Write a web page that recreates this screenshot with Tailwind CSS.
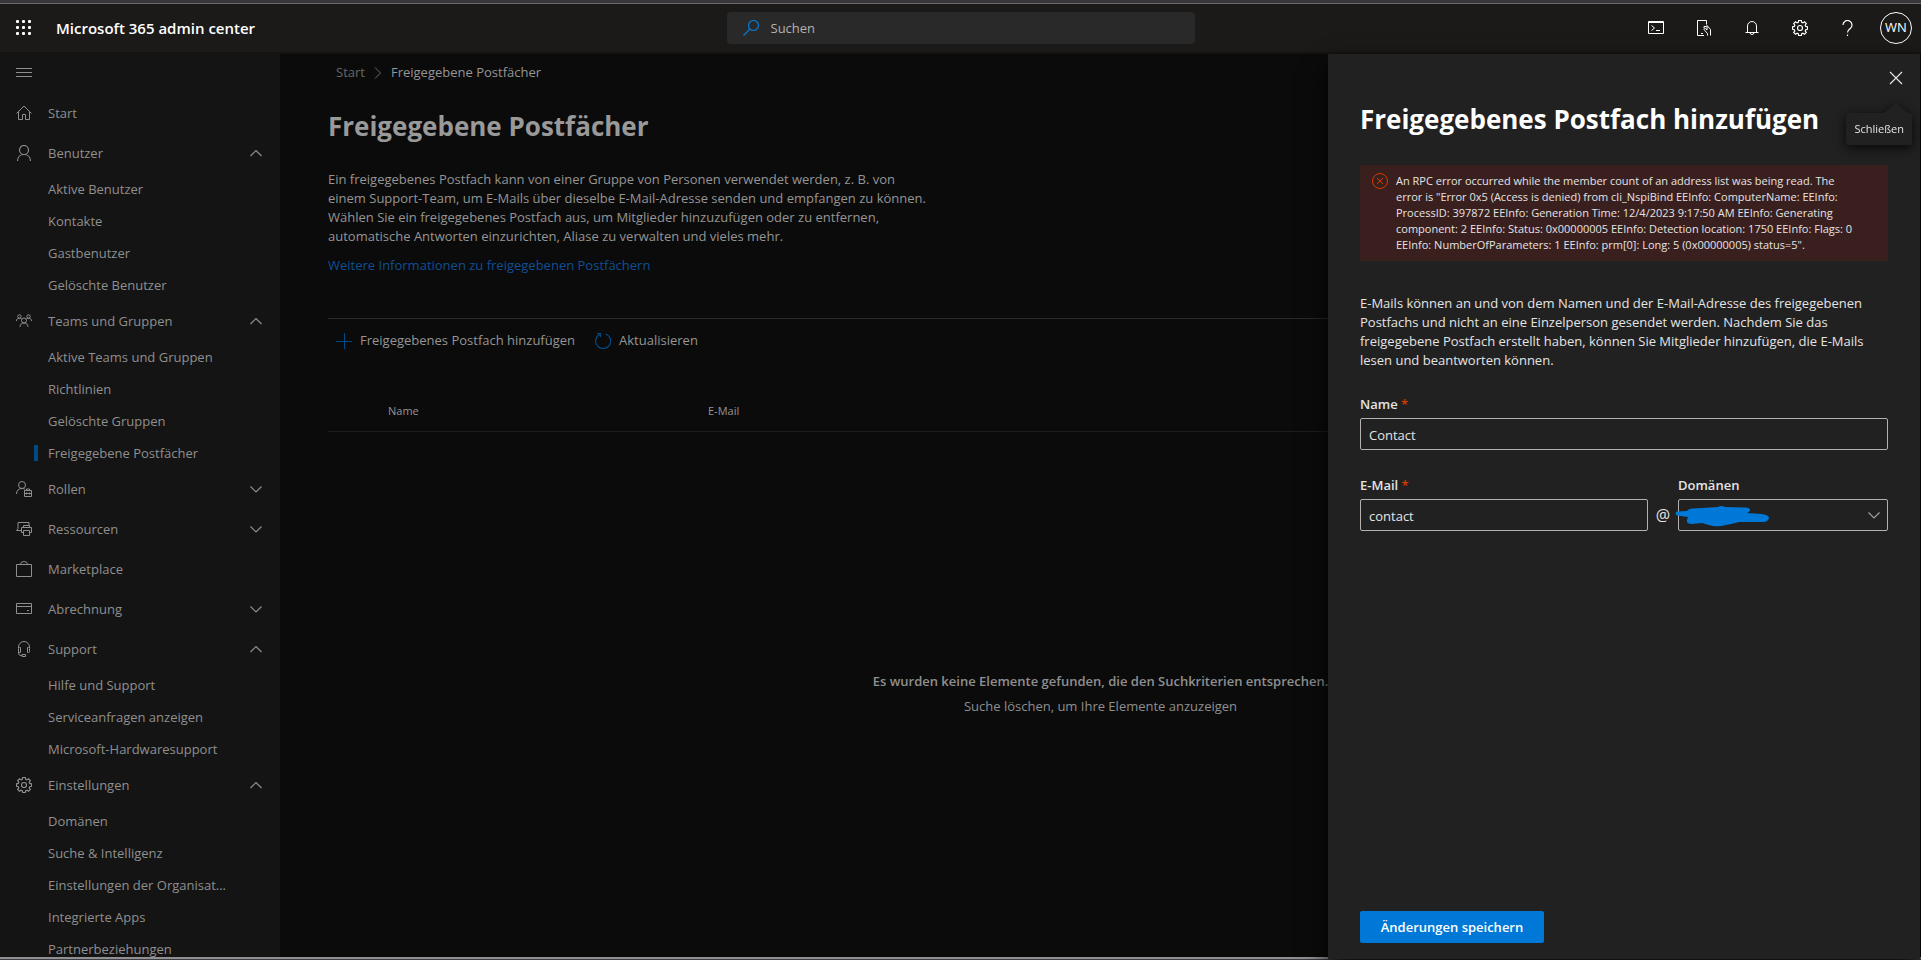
<!DOCTYPE html>
<html lang="de">

<head>
    <meta charset="UTF-8">
    <meta name="viewport" content="width=device-width, initial-scale=1.0">
    <title>Microsoft 365 admin center</title>
    <script src="https://cdn.jsdelivr.net/npm/@tailwindcss/browser@4"></script>
</head>

<body class="h-screen flex flex-col overflow-hidden bg-[#0b0b0b] text-[#8f8f8f] text-[13px] font-['Open_Sans','Noto_Sans',sans-serif]">

    <!-- Icons used more than once -->
    <svg class="hidden">
        <symbol id="up" viewBox="0 0 12 12">
            <path d="M0.5 9L6 3.5L11.5 9" fill="none" stroke="currentColor" stroke-width="1.2" />
        </symbol>
        <symbol id="down" viewBox="0 0 12 12">
            <path d="M0.5 3.5L6 9L11.5 3.5" fill="none" stroke="currentColor" stroke-width="1.2" />
        </symbol>
        <symbol id="gear" viewBox="0 0 16 16">
            <path d="M6.7 0.5h2.6l.4 1.9 1.2.5 1.7-1.1 1.7 1.8-1.1 1.6.5 1.2 1.9.4v2.5l-1.9.4-.5 1.2 1.1 1.6-1.8 1.8-1.6-1.1-1.2.5-.4 1.8H6.7l-.4-1.8-1.2-.5-1.6 1.1-1.8-1.8 1.1-1.6-.5-1.2-1.8-.4V6.8l1.8-.4.5-1.2-1.1-1.6 1.8-1.8 1.6 1.1 1.2-.5z" fill="none" stroke="currentColor" stroke-width="1.2" />
            <circle cx="8" cy="8" r="2.5" fill="none" stroke="currentColor" stroke-width="1.2" />
        </symbol>
    </svg>

    <!-- Window edge -->
    <div class="h-1 shrink-0 bg-[#38383c] border-b border-[#6c6a68]"></div>

    <!-- Header -->
    <header class="h-[50px] shrink-0 flex items-center justify-between bg-[#1b1a19] border-b-2 border-[#141312] px-[9px] text-white">
        <div class="flex items-center flex-1">
            <button aria-label="App-Startfeld" class="ml-[7px]">
                <svg class="size-4" viewBox="0 0 16 16" fill="currentColor">
                    <rect x="0" y="0" width="3" height="3" rx="1" /><rect x="6" y="0" width="3" height="3" rx="1" /><rect x="12" y="0" width="3" height="3" rx="1" />
                    <rect x="0" y="6" width="3" height="3" rx="1" /><rect x="6" y="6" width="3" height="3" rx="1" /><rect x="12" y="6" width="3" height="3" rx="1" />
                    <rect x="0" y="12" width="3" height="3" rx="1" /><rect x="6" y="12" width="3" height="3" rx="1" /><rect x="12" y="12" width="3" height="3" rx="1" />
                </svg>
            </button>
            <a href="#" class="ml-6 text-[15px] font-semibold">Microsoft 365 admin center</a>
        </div>
        <label class="w-[468px] h-8 flex items-center gap-3 rounded bg-[#292929] px-4">
            <svg class="size-4 shrink-0 text-[#0078d4]" viewBox="0 0 16 16" fill="none" stroke="currentColor" stroke-width="1.2">
                <circle cx="10.5" cy="5.5" r="5" />
                <path d="M7 9L0.5 15.5" />
            </svg>
            <input type="search" aria-label="Suchen" placeholder="Suchen" class="w-full pt-0.5 bg-transparent outline-none placeholder:text-[#b4b2b0]">
        </label>
        <div class="flex-1 flex items-center justify-end gap-8">
            <button aria-label="Cloud Shell">
                <svg class="size-4" viewBox="0 0 16 16" fill="none" stroke="currentColor">
                    <path d="M0.5 1.5h15v12h-15zM0.5 2.5h15M3.5 5.5l3 2.5-3 2.5M8 10.5h4" />
                </svg>
            </button>
            <button aria-label="Mobile App">
                <svg class="size-4" viewBox="0 0 16 16" fill="none" stroke="currentColor">
                    <path d="M8 15.5H1.5v-15h9v4M14.5 15.5v-6L11 5.5v4.5L9.5 8.5c-1-.8-2 .3-1.3 1.3l3.3 3.7v2M5 13.5h2M8 8V6.5h2.5" />
                </svg>
            </button>
            <button aria-label="Benachrichtigungen">
                <svg class="size-4" viewBox="0 0 16 16" fill="none" stroke="currentColor">
                    <path d="M3.5 12.5V6a4.5 4.5 0 0 1 9 0v6.5M1.5 12.5h13M6 12.5a2 2 0 0 0 4 0" />
                </svg>
            </button>
            <button aria-label="Einstellungen">
                <svg class="size-4"><use href="#gear" /></svg>
            </button>
            <button aria-label="Hilfe">
                <svg class="size-4" viewBox="0 0 16 16" fill="none" stroke="currentColor" stroke-width="1.2">
                    <path d="M3 5a4.5 4.5 0 1 1 7.3 3.5C8.5 9.9 7.5 10.5 7.5 12.5M7.5 14.5v1.5" />
                </svg>
            </button>
            <button class="-ml-2 size-8 rounded-full border border-white">WN</button>
        </div>
    </header>

    <div class="flex-1 min-h-0 flex">

        <!-- Navigation -->
        <nav class="w-[280px] shrink-0 overflow-hidden bg-[#141414] [&_svg]:mb-0.5">
            <button aria-label="Navigation reduzieren" class="h-10 px-4 block">
                <svg class="size-4" viewBox="0 0 16 16" stroke="currentColor">
                    <path d="M0 3.5h16M0 7.5h16M0 11.5h16" />
                </svg>
            </button>
            <a href="#" class="h-10 px-4 flex items-center gap-4">
                <svg class="size-4" viewBox="0 0 16 16" fill="none" stroke="currentColor">
                    <path d="M0.5 8.5L8 1l7.5 7.5M2.5 7v7.5h4v-5h3v5h4V7" />
                </svg>
                Start
            </a>

            <button class="w-full h-10 pl-4 pr-[18px] flex items-center gap-4 text-left">
                <svg class="size-4" viewBox="0 0 16 16" fill="none" stroke="currentColor" stroke-width="1.2">
                    <circle cx="8" cy="5" r="4.5" />
                    <path d="M1.5 16c0-3.8 2.7-6.5 6.5-6.5s6.5 2.7 6.5 6.5" />
                </svg>
                <span class="flex-1">Benutzer</span>
                <svg class="size-3"><use href="#up" /></svg>
            </button>
            <ul>
                <li><a href="#" class="h-8 pl-12 flex items-center">Aktive Benutzer</a></li>
                <li><a href="#" class="h-8 pl-12 flex items-center">Kontakte</a></li>
                <li><a href="#" class="h-8 pl-12 flex items-center">Gastbenutzer</a></li>
                <li><a href="#" class="h-8 pl-12 flex items-center">Gelöschte Benutzer</a></li>
            </ul>

            <button class="w-full h-10 pl-4 pr-[18px] flex items-center gap-4 text-left">
                <svg class="size-4" viewBox="0 0 16 16" fill="none" stroke="currentColor">
                    <circle cx="3.5" cy="3.5" r="1.7" />
                    <circle cx="12.5" cy="3.5" r="1.7" />
                    <circle cx="8" cy="7.5" r="2.5" />
                    <path d="M0.5 8c0-2 1.2-2.8 3-2.8 1 0 1.7.3 2.2 1M15.5 8c0-2-1.2-2.8-3-2.8-1 0-1.7.3-2.2 1M4 14c0-2.5 1.6-4 4-4s4 1.5 4 4" />
                </svg>
                <span class="flex-1">Teams und Gruppen</span>
                <svg class="size-3"><use href="#up" /></svg>
            </button>
            <ul>
                <li><a href="#" class="h-8 pl-12 flex items-center">Aktive Teams und Gruppen</a></li>
                <li><a href="#" class="h-8 pl-12 flex items-center">Richtlinien</a></li>
                <li><a href="#" class="h-8 pl-12 flex items-center">Gelöschte Gruppen</a></li>
                <li>
                    <a href="#" aria-current="page" class="h-8 pl-[34px] flex items-center gap-[10px]">
                        <span class="w-1 h-4 mb-0.5 bg-[#004a84]"></span>Freigegebene Postfächer
                    </a>
                </li>
            </ul>

            <button class="w-full h-10 pl-4 pr-[18px] flex items-center gap-4 text-left">
                <svg class="size-4" viewBox="0 0 16 16" fill="none" stroke="currentColor">
                    <circle cx="6" cy="4" r="3.5" />
                    <path d="M0.5 13c0-3.5 2.2-5.5 5.5-5.5 1.2 0 2.2.3 3 .8M8.5 9.5h7v6h-7zM10.5 9.5v-1.5h3v1.5M8.5 12.5h7M10.5 11.5v2M13.5 11.5v2" />
                </svg>
                <span class="flex-1">Rollen</span>
                <svg class="size-3"><use href="#down" /></svg>
            </button>
            <button class="w-full h-10 pl-4 pr-[18px] flex items-center gap-4 text-left">
                <svg class="size-4" viewBox="0 0 16 16" fill="none" stroke="currentColor">
                    <path d="M5 9.5H0.5l1.5-2v-6h11v3M7.5 6.5v-2h6v2M7.5 11.5h-2v-5h10v5h-2M7.5 9.5h6v5h-6z" />
                </svg>
                <span class="flex-1">Ressourcen</span>
                <svg class="size-3"><use href="#down" /></svg>
            </button>
            <a href="#" class="h-10 px-4 flex items-center gap-4">
                <svg class="size-4" viewBox="0 0 16 16" fill="none" stroke="currentColor">
                    <path d="M0.5 3.5h15v12h-15zM4.5 3.5a3.5 3 0 0 1 7 0" />
                </svg>
                Marketplace
            </a>
            <button class="w-full h-10 pl-4 pr-[18px] flex items-center gap-4 text-left">
                <svg class="size-4" viewBox="0 0 16 16" fill="none" stroke="currentColor">
                    <path d="M0.5 2.5h15v10h-15zM0.5 5.5h15M11 9.5h2" />
                </svg>
                <span class="flex-1">Abrechnung</span>
                <svg class="size-3"><use href="#down" /></svg>
            </button>

            <button class="w-full h-10 pl-4 pr-[18px] flex items-center gap-4 text-left">
                <svg class="size-4" viewBox="0 0 16 16" fill="none" stroke="currentColor">
                    <path d="M2.5 7V6a5.5 5.5 0 0 1 11 0v1M4.5 6.5v5h-1a1 1 0 0 1-1-1v-3a1 1 0 0 1 1-1zM11.5 6.5v5h1a1 1 0 0 0 1-1v-3a1 1 0 0 0-1-1zM2.5 10.5v1.5a2.5 2.5 0 0 0 2.5 2.5h1M6 13.5h3.5v2H6z" />
                </svg>
                <span class="flex-1">Support</span>
                <svg class="size-3"><use href="#up" /></svg>
            </button>
            <ul>
                <li><a href="#" class="h-8 pl-12 flex items-center">Hilfe und Support</a></li>
                <li><a href="#" class="h-8 pl-12 flex items-center">Serviceanfragen anzeigen</a></li>
                <li><a href="#" class="h-8 pl-12 flex items-center">Microsoft-Hardwaresupport</a></li>
            </ul>

            <button class="w-full h-10 pl-4 pr-[18px] flex items-center gap-4 text-left">
                <svg class="size-4"><use href="#gear" /></svg>
                <span class="flex-1">Einstellungen</span>
                <svg class="size-3"><use href="#up" /></svg>
            </button>
            <ul>
                <li><a href="#" class="h-8 pl-12 flex items-center">Domänen</a></li>
                <li><a href="#" class="h-8 pl-12 flex items-center">Suche &amp; Intelligenz</a></li>
                <li><a href="#" class="h-8 pl-12 flex items-center">Einstellungen der Organisat...</a></li>
                <li><a href="#" class="h-8 pl-12 flex items-center">Integrierte Apps</a></li>
                <li><a href="#" class="h-8 pl-12 flex items-center">Partnerbeziehungen</a></li>
            </ul>
        </nav>

        <!-- Page -->
        <main class="flex-1 min-w-0 overflow-hidden px-12">
            <div class="h-[38px] pl-2 flex items-center gap-[9px]">
                <a href="#" class="text-[#676767]">Start</a>
                <svg class="w-2 h-3" viewBox="0 0 8 12" fill="none" stroke="#676767">
                    <path d="M1 0.5L6.5 6L1 11.5" />
                </svg>
                <span class="text-[#959595]">Freigegebene Postfächer</span>
            </div>
            <h1 class="mt-4 text-[26px] leading-9 font-bold text-[#999]">Freigegebene Postfächer</h1>
            <p class="mt-[26px] leading-[19px] text-[#959595]">
                Ein freigegebenes Postfach kann von einer Gruppe von Personen verwendet werden, z. B. von<br>
                einem Support-Team, um E-Mails über dieselbe E-Mail-Adresse senden und empfangen zu können.<br>
                Wählen Sie ein freigegebenes Postfach aus, um Mitglieder hinzuzufügen oder zu entfernen,<br>
                automatische Antworten einzurichten, Aliase zu verwalten und vieles mehr.
            </p>
            <a href="#" class="mt-[10px] block leading-[19px] text-[#0f4f94]">Weitere Informationen zu freigegebenen Postfächern</a>

            <div class="mt-[43px] h-[45px] pl-2 flex items-center gap-5 border-t border-[#2a2a2a] text-[#959595]">
                <button class="flex items-center gap-2">
                    <svg class="size-4" viewBox="0 0 16 16" stroke="#004a84">
                        <path d="M0 8.5h16M8.5 0v16" />
                    </svg>
                    Freigegebenes Postfach hinzufügen
                </button>
                <button class="flex items-center gap-2">
                    <svg class="size-4" viewBox="0 0 16 16" fill="none" stroke="#004a84" stroke-width="1.2">
                        <path d="M10.5 1a7.5 7.5 0 1 1-5.5 0.3M2 0.5h3.5V4" />
                    </svg>
                    Aktualisieren
                </button>
            </div>

            <table class="mt-7 w-full table-fixed text-[11px] text-left text-[#959595]">
                <thead>
                    <tr class="h-10 border-b border-[#1e1e1e]">
                        <th class="w-[60px]"></th>
                        <th class="w-[320px] font-normal">Name</th>
                        <th class="font-normal">E-Mail</th>
                    </tr>
                </thead>
            </table>

            <div class="mt-[237px] text-center leading-[25px]">
                <p class="font-semibold">Es wurden keine Elemente gefunden, die den Suchkriterien entsprechen.</p>
                <p>Suche löschen, um Ihre Elemente anzuzeigen</p>
            </div>
        </main>
    </div>

    <!-- Bottom edge -->
    <div class="h-[3px] shrink-0 bg-[#8f8f8f] border-b border-[#3f3e47]"></div>

    <!-- Panel lying over the page -->
    <aside class="absolute top-[54px] bottom-px right-px w-[592px] flex flex-col items-start px-8 pt-2 pb-4 bg-[#212121] text-[#e4e4e4] shadow-[0_12px_24px_rgba(0,0,0,0.9)]">
        <button aria-label="Schließen" class="-mr-6 size-8 self-end flex items-center justify-center">
            <svg class="size-[14px]" viewBox="0 0 14 14" stroke="currentColor" stroke-width="1.2">
                <path d="M1 1l12 12M13 1L1 13" />
            </svg>
        </button>
        <div role="tooltip" class="absolute top-[59px] right-2 h-8 px-2 flex items-center rounded-xs bg-[#212121] text-[11px] drop-shadow-[0_3px_6px_rgba(0,0,0,0.8)]">
            <svg class="absolute -top-[10px] right-1 w-6 h-[10px]" viewBox="0 0 24 10"><path d="M0 10L12 0L24 10z" fill="#212121" /></svg>
            Schließen
        </div>

        <h2 class="mt-[7px] text-[26px] leading-9 font-bold text-white">Freigegebenes Postfach hinzufügen</h2>

        <div role="alert" class="mt-7 w-full flex gap-2 bg-[#3a1f1f] px-3 py-2 text-[11px] leading-4">
            <svg class="size-4 shrink-0" viewBox="0 0 16 16" fill="none" stroke="#d83b01">
                <circle cx="8" cy="8" r="7.5" />
                <path d="M5 5l6 6M11 5l-6 6" />
            </svg>
            <p>
                An RPC error occurred while the member count of an address list was being read. The<br>
                error is "Error 0x5 (Access is denied) from cli_NspiBind EEInfo: ComputerName: EEInfo:<br>
                ProcessID: 397872 EEInfo: Generation Time: 12/4/2023 9:17:50 AM EEInfo: Generating<br>
                component: 2 EEInfo: Status: 0x00000005 EEInfo: Detection location: 1750 EEInfo: Flags: 0<br>
                EEInfo: NumberOfParameters: 1 EEInfo: prm[0]: Long: 5 (0x00000005) status=5".
            </p>
        </div>

        <p class="mt-[33px] leading-[19px]">
            E-Mails können an und von dem Namen und der E-Mail-Adresse des freigegebenen
            Postfachs und nicht an eine Einzelperson gesendet werden. Nachdem Sie das
            freigegebene Postfach erstellt haben, können Sie Mitglieder hinzufügen, die E-Mails
            lesen und beantworten können.
        </p>

        <form id="mailboxForm" class="mt-6 w-full">
            <label for="name" class="block leading-5 font-semibold">Name <span class="text-[#d83b01]">*</span></label>
            <input id="name" type="text" value="Contact" class="mt-1 w-full h-8 px-2 pt-0.5 border border-[#b3b0ad] rounded-xs">

            <div class="mt-[25px] flex items-end">
                <div class="flex-1">
                    <label for="email" class="block leading-5 font-semibold">E-Mail <span class="text-[#d83b01]">*</span></label>
                    <input id="email" type="text" value="contact" class="mt-1 w-full h-8 px-2 pt-0.5 border border-[#b3b0ad] rounded-xs">
                </div>
                <span class="w-[30px] text-center leading-8 text-base">@</span>
                <div class="w-[210px]">
                    <label for="domain" class="block leading-5 font-semibold">Domänen</label>
                    <div class="relative mt-1">
                        <select id="domain" class="block w-full h-8 px-2 appearance-none border border-[#b3b0ad] rounded-xs">
                            <option></option>
                        </select>
                        <svg class="absolute right-2 top-[10px] size-3 text-[#a0a0a0] pointer-events-none"><use href="#down" /></svg>
                        <!-- Blue pen stroke over the domain -->
                        <svg class="absolute -left-1 top-1 w-24 h-7 pointer-events-none" viewBox="0 0 96 28">
                            <path d="M3 8.5L13 8Q14 6 18 5.5L28 5L44 4Q47 2 51 4L70 4.5Q77 4 76 8L73 10L88 11Q95 12 95 15Q94 19 89 19L65 19Q58 21 52 22Q45 24 39 23Q34 22 28 20L18 21Q12 21 13 17L14 14L3 12.5Q0 10.5 3 8.5z" fill="#0078d7" />
                        </svg>
                    </div>
                </div>
            </div>
        </form>

        <button type="submit" form="mailboxForm" class="mt-auto w-[184px] h-8 pt-0.5 rounded-xs bg-[#0078d7] font-semibold text-white">Änderungen speichern</button>
    </aside>

</body>

</html>
